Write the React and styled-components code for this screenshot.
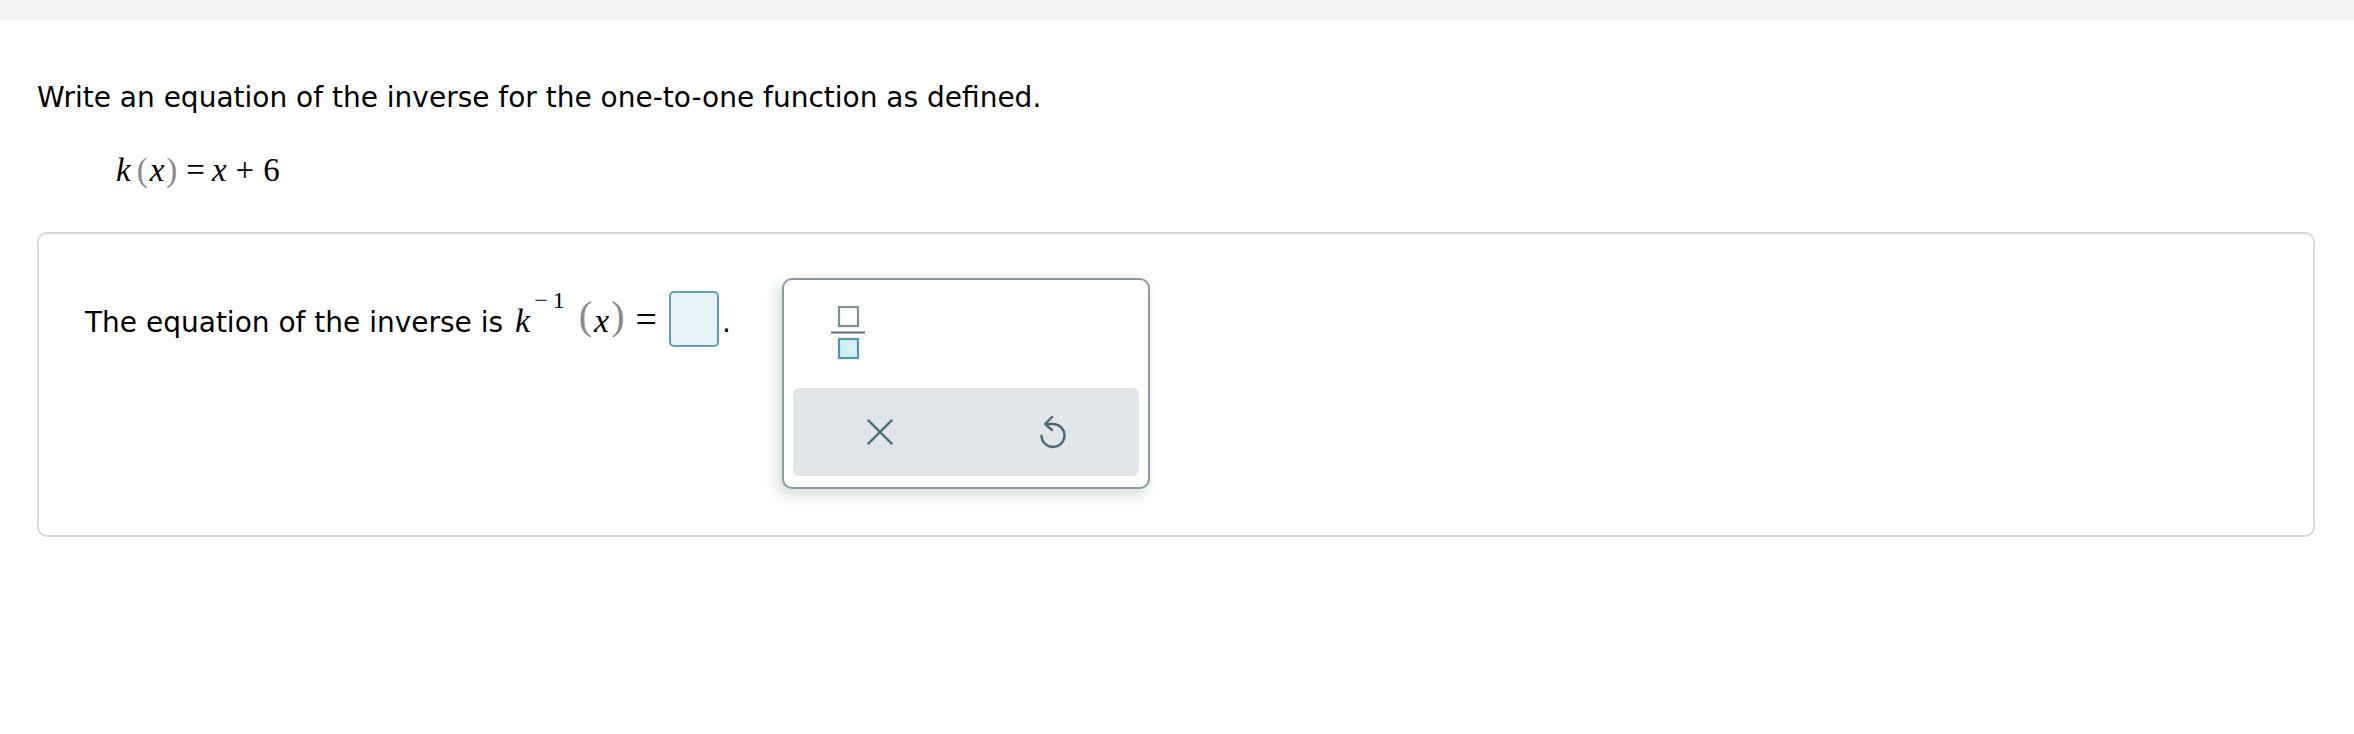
import React from "react";
import styled, { createGlobalStyle } from "styled-components";

const GlobalStyle = createGlobalStyle`
  html, body {
    margin: 0;
    padding: 0;
    background: #ffffff;
  }
  body {
    font-family: "DejaVu Sans", Verdana, sans-serif;
    color: #000000;
  }
`;

const TopBar = styled.div`
  height: 20px;
  background: #f1f2f4;
`;

const Page = styled.main`
  padding: 0 39px 0 37px;
`;

const Prompt = styled.p`
  margin: 0;
  padding-top: 60px;
  font-size: 28px;
  line-height: 36px;
`;

const Formula = styled.div`
  margin-top: 33px;
  padding-left: 79px;
  height: 42px;
  font-family: "Liberation Serif", "Times New Roman", serif;
  font-size: 33px;
  line-height: 42px;
  white-space: nowrap;
`;

const Var = styled.span`
  font-style: italic;
  margin-right: ${(p) => p.$after || "0"};
`;

const Paren = styled.span`
  color: #8a8a8a;
  font-size: ${(p) => p.$size || "inherit"};
  vertical-align: ${(p) => p.$lift || "baseline"};
  margin: 0 ${(p) => p.$gap || "2px"};
`;

const Op = styled.span`
  margin: ${(p) => p.$margin || "0 5px"};
  font-size: ${(p) => p.$size || "inherit"};
`;

const AnswerCard = styled.section`
  margin-top: 41px;
  height: 257px;
  border: 2px solid #d6d9dc;
  border-radius: 10px;
  display: flex;
  align-items: flex-start;
  padding: 44px 0 0 46px;
`;

const Sentence = styled.div`
  flex: 0 0 697px;
  margin-top: 4px;
  font-size: 28px;
  line-height: 36px;
  white-space: nowrap;
`;

const MathRun = styled.span`
  font-family: "Liberation Serif", "Times New Roman", serif;
  font-size: 34px;
  margin-left: 12px;
`;

const Sup = styled.span`
  font-size: 24px;
  letter-spacing: 5px;
  vertical-align: 24px;
  margin-left: 4px;
  margin-right: 7px;
`;

const Slot = styled.span`
  display: inline-block;
  width: 46px;
  height: 52px;
  border: 2px solid #5ea1b3;
  border-radius: 5px;
  background: #e6f3f8;
  vertical-align: -15px;
  margin-left: 4px;
`;

const Period = styled.span`
  margin-left: 3px;
`;

const Palette = styled.div`
  width: 346px;
  height: 189px;
  padding: 9px;
  border: 2px solid #8b9ba3;
  border-radius: 10px;
  background: #ffffff;
  box-shadow: -4px 6px 14px rgba(60, 80, 90, 0.22);
`;

const KeyRow = styled.div`
  display: flex;
  height: 88px;
  margin-bottom: 11px;
`;

const Key = styled.button`
  width: 110px;
  height: 100%;
  border: none;
  background: transparent;
  padding: 0;
  display: flex;
  align-items: center;
  justify-content: center;
  cursor: pointer;
`;

const ActionBar = styled.div`
  height: 88px;
  border-radius: 6px;
  background: #e0e6e9;
  display: grid;
  grid-template-columns: 1fr 1fr;
`;

const ActionButton = styled.button`
  border: none;
  background: transparent;
  padding: 0;
  display: flex;
  align-items: center;
  justify-content: center;
  cursor: pointer;
`;

const FractionIcon = () => (
  <svg width="34" height="54" viewBox="0 0 34 54">
    <rect x="8" y="1" width="19" height="19" fill="none" stroke="#7e9199" strokeWidth="2.2" />
    <line x1="0" y1="26.5" x2="34" y2="26.5" stroke="#5a7480" strokeWidth="2.2" />
    <rect x="8" y="33" width="19" height="19" fill="#d6eef5" stroke="#4a98b1" strokeWidth="2.2" />
  </svg>
);

const ClearIcon = () => (
  <svg width="26" height="26" viewBox="0 0 26 26">
    <path d="M1.5 1.5 L24.5 24.5 M24.5 1.5 L1.5 24.5" stroke="#4b6a77" strokeWidth="2.4" strokeLinecap="round" />
  </svg>
);

const UndoIcon = () => (
  <svg width="26" height="34" viewBox="0 0 26 34">
    <path
      d="M8 9 H13 A11.5 11.5 0 1 1 1.5 21"
      fill="none"
      stroke="#4b6a77"
      strokeWidth="2.4"
      strokeLinecap="round"
      strokeLinejoin="round"
    />
    <path
      d="M12 2 L5 9 L12 15"
      fill="none"
      stroke="#4b6a77"
      strokeWidth="2.4"
      strokeLinecap="round"
      strokeLinejoin="round"
    />
  </svg>
);

export default function App() {
  return (
    <>
      <GlobalStyle />
      <TopBar />
      <Page>
        <Prompt>Write an equation of the inverse for the one-to-one function as defined.</Prompt>
        <Formula>
          <Var $after="4px">k</Var>
          <Paren>(</Paren>
          <Var>x</Var>
          <Paren>)</Paren>
          <Op $margin="0 7px">=</Op>
          <Var>x</Var>
          <Op $margin="0 9px">+</Op>
          6
        </Formula>
        <AnswerCard>
          <Sentence>
            The equation of the inverse is
            <MathRun>
              <Var>k</Var>
              <Sup>−1</Sup>
              <Paren $size="40px" $lift="3px">(</Paren>
              <Var>x</Var>
              <Paren $size="40px" $lift="3px">)</Paren>
              <Op $margin="0 8px 0 9px" $size="38px">=</Op>
            </MathRun>
            <Slot />
            <Period>.</Period>
          </Sentence>
          <Palette>
            <KeyRow>
              <Key aria-label="fraction">
                <FractionIcon />
              </Key>
            </KeyRow>
            <ActionBar>
              <ActionButton aria-label="clear">
                <ClearIcon />
              </ActionButton>
              <ActionButton aria-label="undo">
                <UndoIcon />
              </ActionButton>
            </ActionBar>
          </Palette>
        </AnswerCard>
      </Page>
    </>
  );
}
